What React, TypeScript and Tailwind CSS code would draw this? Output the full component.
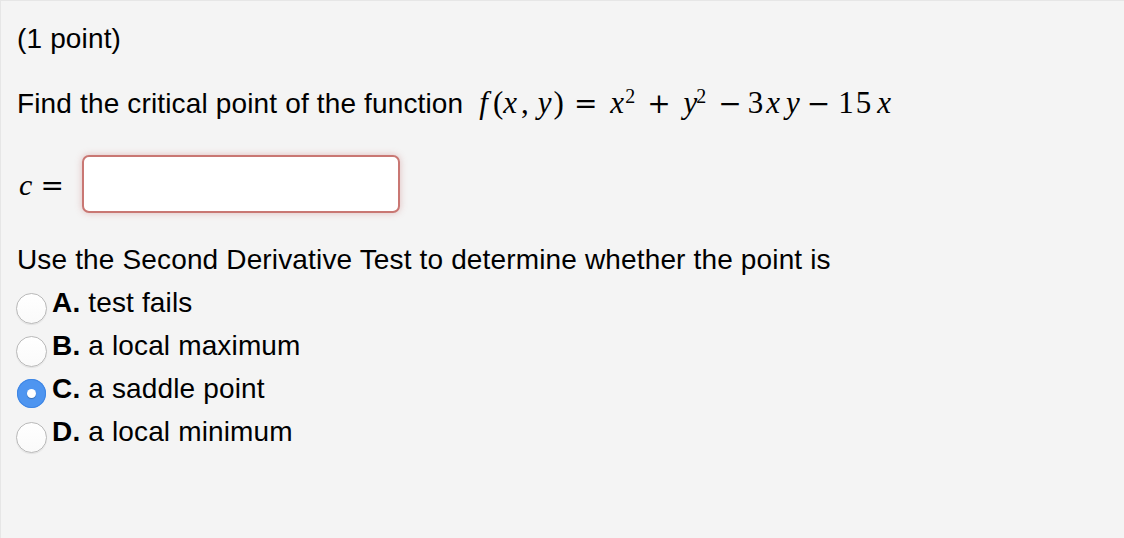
import { useState } from 'react';

const options = [
  { key: 'A', label: 'test fails' },
  { key: 'B', label: 'a local maximum' },
  { key: 'C', label: 'a saddle point' },
  { key: 'D', label: 'a local minimum' },
];

function Radio({ checked }: { checked: boolean }) {
  if (checked) {
    return (
      <span className="mt-[12px] ml-[1px] mr-[1px] flex h-[29px] w-[29px] shrink-0 items-center justify-center rounded-full bg-[#4e95f0] shadow-[inset_0_0_0_1px_#3f86e4]">
        <span className="h-[9px] w-[9px] rounded-full bg-white shadow-[0_1px_1px_rgba(0,0,0,0.25)]" />
      </span>
    );
  }
  return (
    <span className="mt-[12px] h-[31px] w-[31px] shrink-0 rounded-full border border-[#b9b9b9] bg-gradient-to-b from-white to-[#fafafa] shadow-[0_1px_1px_rgba(0,0,0,0.08)]" />
  );
}

// operators use a wider serif so they read like the typeset math
const op = "font-['DejaVu_Serif',serif] text-[28px]";

function Formula() {
  return (
    <span className="font-['Liberation_Serif','Times_New_Roman',serif] text-[31px] leading-[30px] tracking-normal">
      <span className="ml-[16px] italic">f</span>
      <span className="ml-[5px]">(</span>
      <span className="italic">x</span>
      <span className="ml-[4px]">,</span>
      <span className="ml-[9px] italic">y</span>
      <span className="ml-[2px]">)</span>
      <span className={`ml-[10px] ${op}`}>=</span>
      <span className="ml-[13px] italic">x</span>
      <sup className="ml-[1px] text-[20px]">2</sup>
      <span className={`ml-[12px] ${op}`}>+</span>
      <span className="ml-[13px] italic">y</span>
      <sup className="-ml-[1px] text-[20px]">2</sup>
      <span className={`ml-[12px] ${op}`}>−</span>
      <span className="ml-[6px]">3</span>
      <span className="ml-[3px] italic">x</span>
      <span className="ml-[6px] italic">y</span>
      <span className={`ml-[7px] ${op}`}>−</span>
      <span className="ml-[8px]">1</span>
      <span className="ml-[2px]">5</span>
      <span className="ml-[6px] italic">x</span>
    </span>
  );
}

export default function App() {
  const [answer, setAnswer] = useState('');
  const [choice, setChoice] = useState('C');

  return (
    <div className="min-h-screen border-l border-t border-[#e6e6e6] bg-[#f4f4f4] pl-[16px] font-['Liberation_Sans',Arial,sans-serif] text-[28px] tracking-[0.15px] text-black">
      <p className="pt-[24px] leading-[28px]">(1 point)</p>

      <p className="mt-[33px] leading-[36px]">
        Find the critical point of the function
        <Formula />
      </p>

      {/* answer box */}
      <div className="mt-[33px] flex h-[58px] items-center">
        <span className="ml-[2px] font-['Liberation_Serif','Times_New_Roman',serif] text-[30px]">
          <span className="italic">c</span>
          <span className={`ml-[8px] ${op}`}>=</span>
        </span>
        <input
          value={answer}
          onChange={(e) => setAnswer(e.target.value)}
          className="ml-[18px] h-[58px] w-[318px] rounded-[7px] border-2 border-[#c97773] bg-white px-3 outline-none shadow-[0_0_7px_rgba(190,90,90,0.35)]"
        />
      </div>

      <p className="mt-[33px] leading-[28px]">Use the Second Derivative Test to determine whether the point is</p>

      {/* choices */}
      <div className="mt-[7px] -ml-[1px]">
        {options.map((o) => (
          <label key={o.key} className="flex h-[43px] cursor-pointer items-start" onClick={() => setChoice(o.key)}>
            <Radio checked={choice === o.key} />
            <span className="ml-[5px] leading-[43px]">
              <b>{o.key}.</b> {o.label}
            </span>
          </label>
        ))}
      </div>
    </div>
  );
}
